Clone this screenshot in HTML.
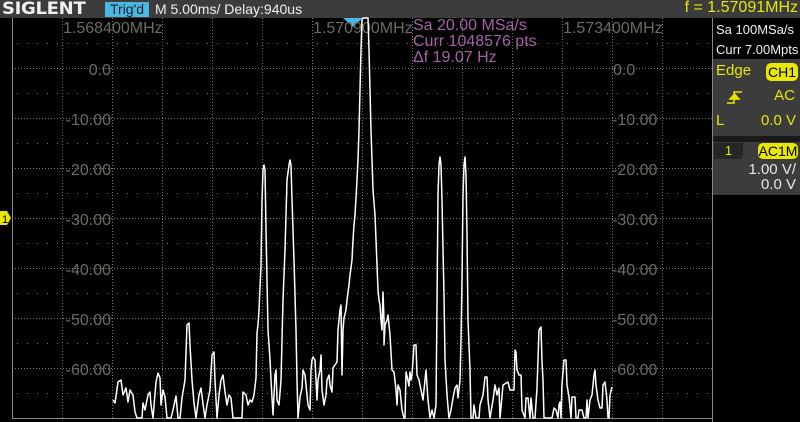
<!DOCTYPE html>
<html><head><meta charset="utf-8"><style>
*{margin:0;padding:0;box-sizing:border-box}
body{width:800px;height:422px;background:#000;position:relative;overflow:hidden;font-family:"Liberation Sans",sans-serif}
.a{position:absolute;white-space:nowrap}
</style></head><body>
<div class="a" style="left:0;top:0;width:800px;height:18px;background:#3c3c3c"></div>
<div class="a" style="left:2px;top:-1px;font-size:17px;font-weight:bold;color:#f0f0f0;letter-spacing:-0.3px;font-family:'DejaVu Sans',sans-serif;transform:scaleX(1.06);transform-origin:left">SIGLENT</div>
<div class="a" style="left:105px;top:2px;width:44px;height:15px;background:#4ab8e0"></div>
<div class="a" style="left:110px;top:1px;font-size:14px;color:#102030">Trig'd</div>
<div class="a" style="left:155px;top:1px;font-size:14px;color:#f0f0f0">M 5.00ms/ Delay:940us</div>
<div class="a" style="right:2px;top:-1px;font-size:16px;color:#e8e800">f = 1.57091MHz</div>

<svg class="a" style="left:0;top:0" width="800" height="422">
<g stroke="#77776a" stroke-width="1" fill="none">
<g stroke-dasharray="1,2">
<path d="M62.5 18V418M112.5 18V418M162.5 18V418M212.5 18V418M262.5 18V418M312.5 18V418M362.5 18V418M412.5 18V418M462.5 18V418M512.5 18V418M562.5 18V418M612.5 18V418M662.5 18V418"/>
<path d="M12 68.5H712M12 118.5H712M12 168.5H712M12 218.5H712M12 268.5H712M12 318.5H712M12 368.5H712"/>
</g>
<g stroke-dasharray="1,9">
<path d="M17 43.5H712M17 93.5H712M17 143.5H712M17 193.5H712M17 243.5H712M17 293.5H712M17 343.5H712M17 393.5H712"/>
</g>
</g>
<path d="M12.5 18V419M712.5 18V422M12 418.5H712" stroke="#888" fill="none"/>
<path d="M0 211H7L11 218L7 225H0Z" fill="#e8e800"/>
<text x="2" y="223" font-size="11" fill="#000" font-family="Liberation Sans">1</text>
<path d="M343 18H363L353 27Z" fill="#4ab8e0"/>
<g font-family="Liberation Sans" font-size="16" fill="#6c6c60">
<text x="63" y="33">1.568400MHz</text><text x="313" y="33">1.570900MHz</text><text x="563" y="33">1.573400MHz</text>
<g text-anchor="end"><text x="111" y="75">0.0</text><text x="111" y="125">-10.00</text><text x="111" y="175">-20.00</text><text x="111" y="225">-30.00</text><text x="111" y="275">-40.00</text><text x="111" y="325">-50.00</text><text x="111" y="375">-60.00</text></g>
<text x="613" y="75">0.0</text><text x="612" y="125">-10.00</text><text x="612" y="175">-20.00</text><text x="612" y="225">-30.00</text><text x="612" y="275">-40.00</text><text x="612" y="325">-50.00</text><text x="612" y="375">-60.00</text>
</g>
<polyline fill="none" stroke="#fff" stroke-width="1.5" stroke-linejoin="round" points="113,400 115,403 118,382 121,380 123,395 126,388 128,402 130,390 133,395 135,412 137,418 142,418 143,403 145,410 148,395 150,392 151,405 153,418 156,382 158,373 160,378 161,405 163,390 165,397 167,418 171,418 173,410 176,396 178,418 180,418 182,398 185,380 187,325 189,323 190,345 192,380 194,403 196,418 199,395 201,388 203,404 205,418 207,405 210,390 212,355 214,352 215,380 217,418 219,395 221,380 223,375 225,392 227,405 229,395 231,398 233,418 242,418 243,392 246,395 248,405 250,400 252,402 254,395 256,378 257,333 258,325 259,310 261,265 262,200 263,170 264,165 265,170 266,230 267,280 268,330 270,360 271,380 273,415 275,375 276,370 277,400 279,405 281,380 283,300 285,250 287,180 289,165 290,160 291,165 292,200 294,260 296,330 297,380 298,418 300,397 302,388 303,370 305,375 307,395 308,405 310,410 311,370 312,360 313,357 315,360 317,400 318,380 320,370 321,355 322,390 324,405 326,395 327,380 329,375 330,385 332,392 333,368 335,365 337,362 338,330 340,310 341,305 342,375 343,330 344,318 346,310 347,300 349,285 350,275 352,260 353,240 354,225 355,215 356,198 357,180 358,160 359,130 360,90 361,50 362,20 363,18 368,18 369,50 370,90 371,130 372,160 373,190 375,215 376,240 377,265 378,290 379,300 380,305 381,320 382,330 383,292 384,320 384,345 385,325 387,320 388,315 389,325 390,335 392,370 394,372 396,390 397,405 398,385 400,390 402,410 404,418 405,418 406,372 407,376 409,386 410,372 411,380 412,375 414,345 416,345 417,375 419,380 421,390 423,400 425,380 426,370 428,400 430,418 432,410 434,418 436,405 437,305 438,195 439,165 440,157 441,165 442,200 443,250 444,295 445,360 447,395 449,418 451,410 453,398 455,388 457,385 458,398 460,380 461,340 462,280 463,195 464,165 465,157 466,175 467,235 468,320 470,370 471,418 473,418 474,405 476,418 479,418 480,405 483,395 485,377 487,377 488,400 490,418 493,400 495,385 497,395 499,388 500,418 503,385 508,382 510,390 514,390 515,350 516,352 517,370 519,375 521,375 522,410 525,418 526,398 528,398 530,418 531,398 533,418 535,418 537,388 539,330 541,327 542,362 543,380 544,418 552,418 554,408 556,410 558,418 559,405 560,402 561,418 562,384 564,360 566,360 567,385 569,397 571,418 572,397 575,397 576,418 578,418 579,410 582,410 584,418 586,418 587,400 588,418 590,400 592,395 594,375 595,370 596,385 598,400 600,408 602,408 603,385 605,382 607,400 608,418 609,418 610,395 612,387"/>
</svg>

<div class="a" style="left:413px;top:18px;font-size:16px;line-height:16px;color:#a860a8">Sa 20.00 MSa/s<br>Curr 1048576 pts<br>Δf 19.07 Hz</div>

<div class="a" style="left:713px;top:18px;width:87px;height:41px;background:#000"></div>
<div class="a" style="left:716px;top:20px;font-size:13px;line-height:20px;color:#f0f0f0">Sa 100MSa/s<br>Curr 7.00Mpts</div>
<div class="a" style="left:713px;top:59px;width:87px;height:77px;background:#3c3c3c"></div>
<div class="a" style="left:716px;top:62px;font-size:15px;color:#e8e800">Edge</div>
<div class="a" style="left:766px;top:63px;width:32px;height:18px;background:#e8e800;border-radius:5px;font-size:14px;color:#000;text-align:center;line-height:18px">CH1</div>
<svg class="a" style="left:726px;top:87px" width="20" height="20"><path d="M1 16H8V5H16M4 12H13L8.5 7Z" stroke="#e8e800" stroke-width="1.5" fill="none"/><path d="M5 12H12L8.5 8Z" fill="#e8e800"/></svg>
<div class="a" style="right:5px;top:87px;font-size:15px;color:#e8e800">AC</div>
<div class="a" style="left:716px;top:112px;font-size:15px;color:#e8e800">L</div>
<div class="a" style="right:4px;top:112px;font-size:15px;color:#e8e800">0.0 V</div>
<div class="a" style="left:713px;top:136px;width:87px;height:6px;background:#1a1a1a"></div>
<div class="a" style="left:713px;top:142px;width:87px;height:53px;background:#3c3c3c"></div>
<div class="a" style="left:714px;top:143px;width:29px;height:16px;background:#262626;border-radius:0 0 4px 0;font-size:13px;color:#e8e800;text-align:center;line-height:16px">1</div>
<div class="a" style="left:758px;top:143px;width:40px;height:16px;background:#e8e800;border-radius:5px;font-size:14px;color:#000;text-align:center;line-height:16px">AC1M</div>
<div class="a" style="right:4px;top:161px;font-size:15px;color:#e8e8e8">1.00 V/</div>
<div class="a" style="right:4px;top:176px;font-size:15px;color:#e8e8e8">0.0 V</div>
</body></html>
